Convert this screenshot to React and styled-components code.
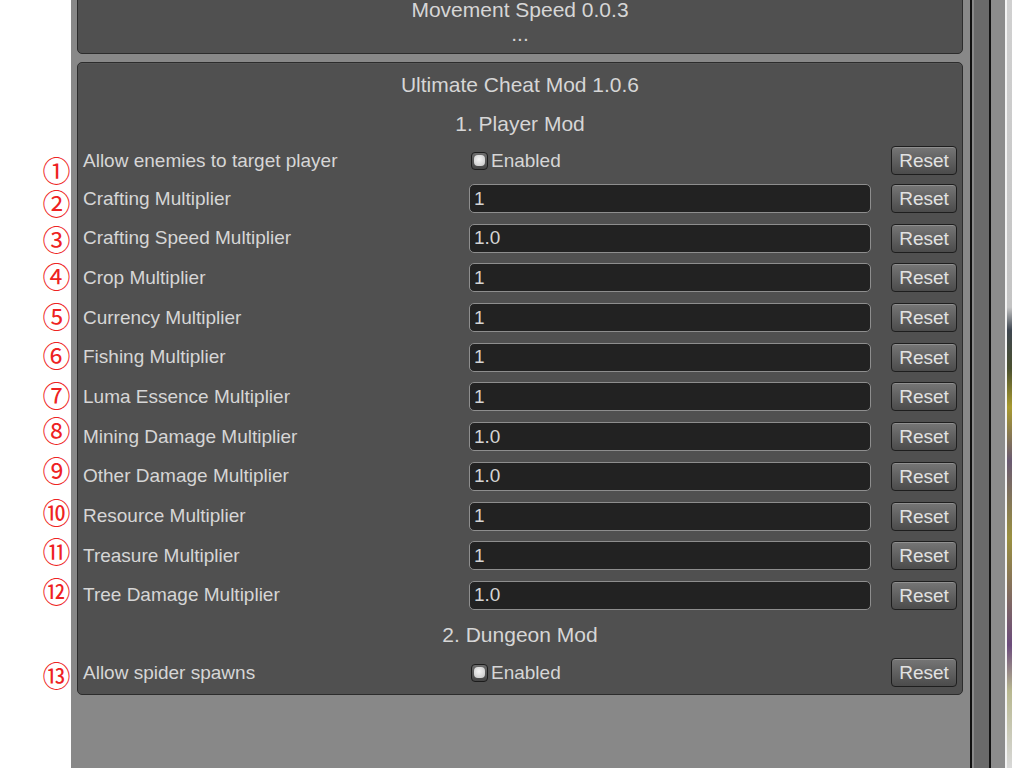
import React from "react";
import styled, { createGlobalStyle } from "styled-components";

const Global = createGlobalStyle`
  html, body { margin: 0; padding: 0; background: #fff; overflow: hidden; }
  #root { width: 1012px; height: 768px; }
`;

const Screen = styled.div`
  display: flex;
  width: 1012px;
  height: 768px;
  overflow: hidden;
  background: #fff;
  font-family: "Liberation Sans", Arial, sans-serif;
`;

const Margin = styled.div`
  width: 71px;
  flex: none;
  background: #fff;
`;

const Inspector = styled.div`
  width: 899px;
  flex: none;
  box-sizing: border-box;
  background: #888888;
  padding: 0 7px 0 6px;
  display: flex;
  flex-direction: column;
  gap: 8px;
`;

const Panel = styled.section`
  position: relative;
  background: #505050;
  border: 1px solid #2c2c2c;
  border-radius: 5px;
  box-shadow: inset 0 1px 0 rgba(255, 255, 255, 0.04);
  color: #d6d6d6;
`;

const TopPanel = styled(Panel)`
  margin-top: -10px;
  padding: 9px 0 7px;
  text-align: center;
  font-size: 21px;
`;

const TopLine = styled.div`
  line-height: ${(p) => p.$lh}px;
  margin-top: ${(p) => p.$mt || 0}px;
`;

const ModPanel = styled(Panel)`
  padding: 3px 0 2px;
  display: flex;
  flex-direction: column;
`;

const Heading = styled.div`
  height: ${(p) => p.$h}px;
  display: flex;
  align-items: center;
  justify-content: center;
  font-size: 21px;
  line-height: 24px;
`;

const Row = styled.div`
  position: relative;
  height: ${(p) => p.$h}px;
  display: grid;
  grid-template-columns: 386px 402px 1fr;
  align-items: center;
  padding-left: 5px;
`;

const Label = styled.div`
  font-size: 19px;
  line-height: 22px;
  white-space: nowrap;
`;

const Field = styled.input`
  box-sizing: border-box;
  width: 402px;
  height: 29px;
  margin: 0;
  padding: 0 0 0 4px;
  background: #222222;
  border: 1px solid #8e8e8e;
  border-radius: 5px;
  color: #d4d4d4;
  font-family: "Liberation Sans", Arial, sans-serif;
  font-size: 19px;
  outline: none;
`;

const Toggle = styled.label`
  display: flex;
  align-items: center;
  gap: 3px;
  padding-left: 2px;
  font-size: 19px;
  line-height: 22px;
`;

const Box = styled.span`
  box-sizing: border-box;
  width: 17px;
  height: 18px;
  display: inline-flex;
  align-items: center;
  justify-content: center;
  border: 1px solid #1c1c1c;
  border-radius: 4px;
  background: linear-gradient(#6c6c6c, #444444);
`;

const Dot = styled.span`
  width: 11px;
  height: 11px;
  border-radius: 4px;
  background: radial-gradient(circle at 45% 40%, #f4f4f4, #c4c4c4);
`;

const ResetButton = styled.button`
  justify-self: end;
  margin-right: 5px;
  box-sizing: border-box;
  width: 66px;
  height: 29px;
  padding: 0;
  border: 1px solid #1e1e1e;
  border-radius: 4px;
  background: linear-gradient(#767676, #4b4b4b);
  box-shadow: inset 0 1px 0 rgba(255, 255, 255, 0.2);
  color: #e2e2e2;
  font-family: "Liberation Sans", Arial, sans-serif;
  font-size: 19px;
  line-height: 27px;
`;

const Marker = styled.span`
  position: absolute;
  left: -35.5px;
  top: 50%;
  width: 28px;
  margin-top: ${(p) => p.$dy - 12}px;
  height: 24px;
  display: flex;
  align-items: center;
  justify-content: center;
  font-family: "Noto Sans CJK JP", "DejaVu Sans", sans-serif;
  font-size: 28px;
  line-height: 24px;
  color: #ee2222;
`;

const Rail = styled.div`
  flex: none;
  width: ${(p) => p.$w}px;
  background: ${(p) => p.$bg};
`;

const Scene = styled.div`
  flex: none;
  width: 5px;
  background: linear-gradient(
    to bottom,
    #d0d0d0 0%,
    #c4c4c4 40%,
    #3e4650 43%,
    #4a5030 48%,
    #a89a30 53%,
    #6a5a72 60%,
    #9a9040 70%,
    #6c4c7c 84%,
    #b8b890 90%,
    #d8d8d8 100%
  );
`;

const marks = ["①", "②", "③", "④", "⑤", "⑥", "⑦", "⑧", "⑨", "⑩", "⑪", "⑫", "⑬"];
const markOffset = [9, 4, 1, -2, -2, -2, -2, -7, -6, -4, -5, -4.5, 2];

const playerRows = [
  ["Crafting Multiplier", "1"],
  ["Crafting Speed Multiplier", "1.0"],
  ["Crop Multiplier", "1"],
  ["Currency Multiplier", "1"],
  ["Fishing Multiplier", "1"],
  ["Luma Essence Multiplier", "1"],
  ["Mining Damage Multiplier", "1.0"],
  ["Other Damage Multiplier", "1.0"],
  ["Resource Multiplier", "1"],
  ["Treasure Multiplier", "1"],
  ["Tree Damage Multiplier", "1.0"],
];

function ToggleRow({ label, index, height }) {
  return (
    <Row $h={height}>
      <Marker $dy={markOffset[index]}>{marks[index]}</Marker>
      <Label>{label}</Label>
      <Toggle>
        <Box>
          <Dot />
        </Box>
        Enabled
      </Toggle>
      <ResetButton>Reset</ResetButton>
    </Row>
  );
}

function FieldRow({ label, value, index }) {
  return (
    <Row $h={39.7}>
      <Marker $dy={markOffset[index]}>{marks[index]}</Marker>
      <Label>{label}</Label>
      <Field readOnly value={value} />
      <ResetButton>Reset</ResetButton>
    </Row>
  );
}

export default function App() {
  return (
    <>
      <Global />
      <Screen>
        <Margin />
        <Inspector>
          <TopPanel>
            <TopLine $lh={20}>Movement Speed 0.0.3</TopLine>
            <TopLine $lh={24} $mt={1.7}>...</TopLine>
          </TopPanel>
          <ModPanel>
            <Heading $h={39}>Ultimate Cheat Mod 1.0.6</Heading>
            <Heading $h={38}>1. Player Mod</Heading>
            <ToggleRow label="Allow enemies to target player" index={0} height={36} />
            {playerRows.map(([label, value], i) => (
              <FieldRow key={label} label={label} value={value} index={i + 1} />
            ))}
            <Heading $h={38.5}>2. Dungeon Mod</Heading>
            <ToggleRow label="Allow spider spawns" index={12} height={38} />
          </ModPanel>
        </Inspector>
        <Rail $w={2} $bg="#111" />
        <Rail $w={2} $bg="#8a8a8a" />
        <Rail $w={15} $bg="#6a6a6a" />
        <Rail $w={2} $bg="#111" />
        <Rail $w={14} $bg="#8c8c8c" />
        <Rail $w={2} $bg="#f2f2f2" />
        <Scene />
      </Screen>
    </>
  );
}
